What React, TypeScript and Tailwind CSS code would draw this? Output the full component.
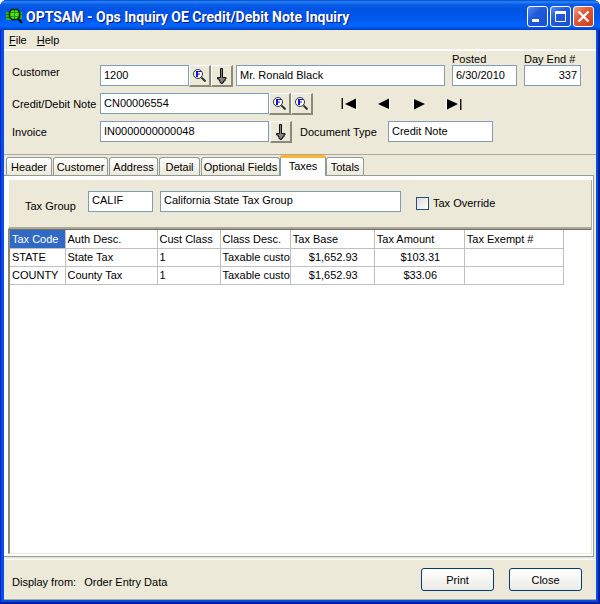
import type { ReactNode } from "react";

type FieldProps = {
  id: string;
  label?: string;
  value: string;
  className?: string;
};

type IconButtonProps = {
  label: string;
  children: ReactNode;
};

const tabs = [
  { name: "Header", width: "w-[46px]" },
  { name: "Customer", width: "w-[55px]" },
  { name: "Address", width: "w-[49px]" },
  { name: "Detail", width: "w-[41px]" },
  { name: "Optional Fields", width: "w-[79px]" },
  { name: "Taxes", width: "w-[46px]" },
  { name: "Totals", width: "w-[38px]" },
];

const columns = [
  { name: "Tax Code", width: "w-[55px]" },
  { name: "Auth Desc.", width: "w-[92px]" },
  { name: "Cust Class", width: "w-[63px]" },
  { name: "Class Desc.", width: "w-[69px]" },
  { name: "Tax Base", width: "w-[84px]" },
  { name: "Tax Amount", width: "w-[90px]" },
  { name: "Tax Exempt #", width: "w-[99px]" },
];

const rows = [
  ["STATE", "State Tax", "1", "Taxable custo", "$1,652.93", "$103.31", ""],
  ["COUNTY", "County Tax", "1", "Taxable custo", "$1,652.93", "$33.06", ""],
];

function Field({ id, label, value, className = "" }: FieldProps) {
  return (
    <input
      id={id}
      aria-label={label}
      readOnly
      defaultValue={value}
      className={`h-[21px] min-w-0 border border-[#7f9db9] bg-white px-[3px] pb-[2px] outline-none ${className}`}
    />
  );
}

function IconButton({ label, children }: IconButtonProps) {
  return (
    <button
      type="button"
      aria-label={label}
      className="flex h-[22px] w-[22px] shrink-0 items-center justify-center border-t border-r-2 border-b-2 border-l border-t-white border-r-[#8b887c] border-b-[#8b887c] border-l-white bg-[#ece9d8]"
    >
      {children}
    </button>
  );
}

function FinderIcon() {
  return (
    <svg width="13" height="13" viewBox="0 0 13 13">
      <circle cx="5" cy="5" r="4.500" fill="#fff" stroke="#333" />
      <path d="M8.500 8.500l4 4" stroke="#333" strokeWidth="2" />
      <path d="M3 2h2v6H3zM5 2h3v1H5zM5 4.500h2v1H5z" fill="#1010e0" />
    </svg>
  );
}

function DrillIcon() {
  return (
    <svg width="10" height="16" viewBox="0 0 10 16">
      <path
        d="M3.500 .5h2v9h3.500v1.500h-1v2h-1.500v1.500h-1v1h-1.500v-1h-1v-2h-1v-1.500h-1.500v-1.500h3z"
        fill="#808080"
        stroke="#111"
      />
    </svg>
  );
}

function NavButton({ label, bar, right }: { label: string; bar?: boolean; right?: boolean }) {
  return (
    <button type="button" aria-label={label} className="flex h-[21px] w-[18px] items-center justify-center">
      <svg
        width="16"
        height="12"
        viewBox="0 0 16 12"
        className={right ? "rotate-180" : ""}
      >
        {bar && <path d="M.5 0v11" stroke="#8b887c" />}
        {bar && <path d="M1.500 0v11" stroke="#111" />}
        {bar ? (
          <path d="M15 .5v10.500L4 6z" />
        ) : (
          <path d="M13 .5v10.500L2 6z" />
        )}
        <path d={bar ? "M15.500 1v11" : "M13.500 1v11"} stroke="#fff" />
      </svg>
    </button>
  );
}

function TitleBar() {
  const button =
    "flex h-[21px] w-[21px] items-center justify-center rounded-[3px] border border-white";
  return (
    <header className="flex h-[30px] items-center bg-[linear-gradient(180deg,#0045cc_0%,#2a86f5_6%,#0a5ee8_14%,#0054e3_30%,#0057ea_60%,#0066ff_85%,#004fdc_95%,#003cc0_100%)] pr-[6px] pl-[6px]">
      <svg width="17" height="17" viewBox="0 0 17 17">
        <path d="M0 5h3v8H0zM13 5h3v7h-3zM2 11h11v2H2z" fill="#2db810" />
        <path d="M0 7.500h3M0 10.500h4M13 7.500h3" stroke="#1b7d0a" />
        <path d="M5.500 2.500h6l2 2.500v5l-2.500 2.500h-5L3.500 10V5z" fill="#4fe01a" />
        <path d="M4 5.500h9M4 9.500h9M8.500 3v9" stroke="#1f9a0c" />
        <path
          d="M5.500 2.500h6l2 2.500v5l-2.500 2.500h-5L3.500 10V5z"
          fill="none"
          stroke="#10240a"
          strokeWidth="1.500"
        />
        <path d="M12 11.500l4 4.500" stroke="#0a1408" strokeWidth="2" />
      </svg>
      <h1 className="ml-[3px] flex-1 truncate pt-[3px] font-[Roboto,sans-serif] text-[14px] leading-[16px] font-bold text-white [text-shadow:1px_1px_0_#0a1883]">
        OPTSAM - Ops Inquiry OE Credit/Debit Note Inquiry
      </h1>
      <div className="flex gap-[2px] pt-[3px]">
        <button
          type="button"
          aria-label="Minimize"
          className={`${button} bg-[linear-gradient(135deg,#5c8cf0,#2159dc_40%,#1a50d4)]`}
        >
          <svg width="13" height="13" viewBox="0 0 13 13">
            <path d="M1 9h7v3H1z" fill="#fff" />
          </svg>
        </button>
        <button
          type="button"
          aria-label="Maximize"
          className={`${button} bg-[linear-gradient(135deg,#5c8cf0,#2159dc_40%,#1a50d4)]`}
        >
          <svg width="13" height="13" viewBox="0 0 13 13">
            <path d="M1.500 2v9.500h10V2" fill="none" stroke="#fff" />
            <path d="M1 1h11v3H1z" fill="#fff" />
          </svg>
        </button>
        <button
          type="button"
          aria-label="Close window"
          className={`${button} bg-[linear-gradient(135deg,#f0a088,#e25a38_40%,#cc3c14)]`}
        >
          <svg width="13" height="13" viewBox="0 0 13 13">
            <path d="M1.500 1.500l10 10M11.500 1.500l-10 10" stroke="#fff" strokeWidth="2.300" />
          </svg>
        </button>
      </div>
    </header>
  );
}

function DocumentHeader() {
  return (
    <section className="flex flex-col gap-[7px] border-t-2 border-b border-t-white border-b-[#aca899] pt-[2px] pr-[15px] pb-[12px] pl-2">
      <div className="flex items-end">
        <label htmlFor="customer" className="w-[88px] shrink-0 pb-[7px]">
          Customer
        </label>
        <Field id="customer" value="1200" className="w-[89px]" />
        <div className="mr-[3px] flex h-[21px]">
          <IconButton label="Find customer">
            <FinderIcon />
          </IconButton>
          <IconButton label="Customer details">
            <DrillIcon />
          </IconButton>
        </div>
        <Field id="customer-name" label="Customer name" value="Mr. Ronald Black" className="flex-1" />
        <div className="ml-[7px] flex w-[65px] flex-col">
          <label htmlFor="posted" className="leading-[12px]">
            Posted
          </label>
          <Field id="posted" value="6/30/2010" />
        </div>
        <div className="ml-[7px] flex w-[57px] flex-col">
          <label htmlFor="day-end" className="leading-[12px] whitespace-nowrap">
            Day End #
          </label>
          <Field id="day-end" value="337" className="text-right" />
        </div>
      </div>

      <div className="flex items-center">
        <label htmlFor="note" className="w-[88px] shrink-0 whitespace-nowrap">
          Credit/Debit Note
        </label>
        <Field id="note" value="CN00006554" className="w-[169px]" />
        <div className="flex h-[21px]">
          <IconButton label="Find note">
            <FinderIcon />
          </IconButton>
          <IconButton label="Find note by customer">
            <FinderIcon />
          </IconButton>
        </div>
        <nav className="ml-[27px] flex gap-[17px]">
          <NavButton label="First" bar />
          <NavButton label="Previous" />
          <NavButton label="Next" right />
          <NavButton label="Last" bar right />
        </nav>
      </div>

      <div className="flex items-center">
        <label htmlFor="invoice" className="w-[88px] shrink-0">
          Invoice
        </label>
        <Field id="invoice" value="IN0000000000048" className="w-[169px]" />
        <div className="ml-px flex h-[21px]">
          <IconButton label="Invoice details">
            <DrillIcon />
          </IconButton>
        </div>
        <label htmlFor="doc-type" className="ml-[8px] w-[88px] whitespace-nowrap">
          Document Type
        </label>
        <Field id="doc-type" value="Credit Note" className="w-[105px]" />
      </div>
    </section>
  );
}

function TaxTable() {
  return (
    <table className="table-fixed border-collapse">
      <thead>
        <tr className="h-[18px]">
          {columns.map((column, i) => (
            <th
              key={column.name}
              className={`${column.width} overflow-hidden border-r border-b border-[#c0c0c0] pl-[2px] text-left font-normal whitespace-nowrap ${
                i === 0 ? "bg-[#316ac5] text-white" : ""
              }`}
            >
              {column.name}
            </th>
          ))}
        </tr>
      </thead>
      <tbody>
        {rows.map((row) => (
          <tr key={row[0]} className="h-[18px]">
            {row.map((cell, i) => (
              <td
                key={columns[i].name}
                className={`border-r border-b border-[#c0c0c0] pl-[2px] whitespace-nowrap ${
                  i === 4 || i === 5 ? "text-center" : ""
                }`}
              >
                {cell}
              </td>
            ))}
          </tr>
        ))}
      </tbody>
    </table>
  );
}

export default function App() {
  return (
    <div className="flex min-h-screen flex-col overflow-hidden rounded-t-[7px] bg-[#0050e6] font-['Liberation_Sans',Arial,sans-serif] text-[11px] leading-[14px] text-black shadow-[inset_1px_0_0_#0019cf,inset_-2px_-2px_0_#001da0]">
      <TitleBar />
      <main className="mx-1 mb-1 flex flex-1 flex-col bg-[#ece9d8]">
        <nav className="flex h-[19px] items-center gap-[10px] px-[5px]">
          <button type="button">
            <span className="underline">F</span>ile
          </button>
          <button type="button">
            <span className="underline">H</span>elp
          </button>
        </nav>

        <DocumentHeader />

        <div role="tablist" className="flex h-[20px] items-end gap-px pl-[2px]">
          {tabs.map(({ name, width }) => (
            <button
              key={name}
              type="button"
              role="tab"
              aria-selected={name === "Taxes"}
              className={`${width} shrink-0 rounded-t-[3px] border-x whitespace-nowrap ${
                name === "Taxes"
                  ? "z-10 -mx-px -mb-px h-[21px] border-t-[3px] border-x-[#919b9c] border-t-[#ffb52e] bg-white pb-[2px]"
                  : "h-[18px] border-t border-[#919b9c] bg-linear-to-b from-white to-[#ece9d8]"
              }`}
            >
              {name}
            </button>
          ))}
        </div>

        <section className="mr-[2px] flex flex-1 flex-col border-t border-r border-b border-[#919b9c] bg-white pt-1 pr-px pb-[2px] pl-1">
          <div className="flex h-[49px] items-center border-r border-b-2 border-l border-r-[#aca899] border-b-[#aca899] border-l-white bg-[#ece9d8] pl-[16px]">
            <label htmlFor="tax-group" className="w-[63px] pt-[4px]">
              Tax Group
            </label>
            <div className="flex flex-1 items-center pb-[5px]">
              <Field id="tax-group" value="CALIF" className="w-[65px]" />
              <Field
                id="tax-group-name"
                label="Tax group description"
                value="California State Tax Group"
                className="ml-[7px] w-[241px]"
              />
              <label className="ml-[15px] flex items-center gap-[4px] pt-[4px]">
                <input
                  type="checkbox"
                  className="h-[13px] w-[13px] appearance-none border border-[#1c5180] bg-linear-to-br from-[#dcdcd7] to-white"
                />
                Tax Override
              </label>
            </div>
          </div>
          <div className="flex-1 overflow-hidden border-t border-r border-b border-l-2 border-t-[#716f64] border-r-[#ece9d8] border-b-[#ece9d8] border-l-[#8b887c]">
            <TaxTable />
          </div>
        </section>

        <footer className="mt-[2px] flex h-[41px] items-center border-t border-b border-t-white border-b-[#aca899] pr-[14px] pl-2">
          <p className="flex flex-1 gap-[8px] pt-[5px]">
            <span>Display from:</span>
            <span>Order Entry Data</span>
          </p>
          <div className="flex gap-[15px]">
            {["Print", "Close"].map((name) => (
              <button
                key={name}
                type="button"
                className="h-[23px] w-[73px] rounded-[3px] border border-[#003c74] bg-linear-to-b from-white to-[#ecebe5]"
              >
                {name}
              </button>
            ))}
          </div>
        </footer>
      </main>
    </div>
  );
}
